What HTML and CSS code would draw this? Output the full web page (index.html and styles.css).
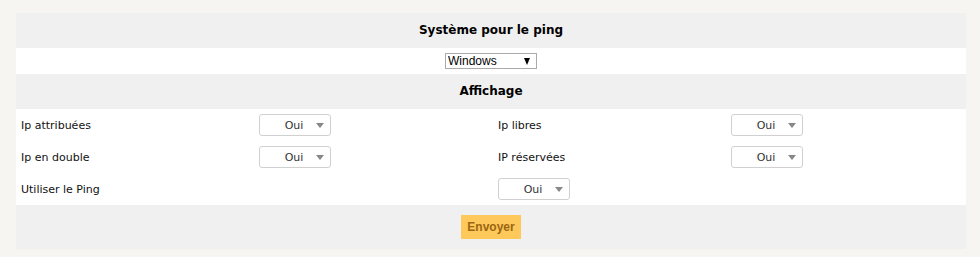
FILE: index.html
```html
<!DOCTYPE html>
<html lang="fr">
<head>
  <meta charset="UTF-8">
  <title>Options du ping</title>
  <link rel="stylesheet" href="styles.css">
</head>
<body>
  <form class="panneau" id="formOptions">
    <div class="titre">Système pour le ping</div>
    <div class="ligne-systeme">
      <span class="choix-systeme">
        <select id="systeme">
          <option>Windows</option>
          <option>Linux</option>
        </select>
      </span>
    </div>
    <div class="titre">Affichage</div>
    <div class="grille">
      <div class="cellule">Ip attribuées</div>
      <div class="cellule"><span class="choix"><select><option>Oui</option><option>Non</option></select></span></div>
      <div class="cellule">Ip libres</div>
      <div class="cellule"><span class="choix"><select><option>Oui</option><option>Non</option></select></span></div>

      <div class="cellule">Ip en double</div>
      <div class="cellule"><span class="choix"><select><option>Oui</option><option>Non</option></select></span></div>
      <div class="cellule">IP réservées</div>
      <div class="cellule"><span class="choix"><select><option>Oui</option><option>Non</option></select></span></div>

      <div class="cellule double">Utiliser le Ping</div>
      <div class="cellule double"><span class="choix"><select><option>Oui</option><option>Non</option></select></span></div>
    </div>
    <div class="pied">
      <button type="submit" class="btn-envoyer">Envoyer</button>
    </div>
  </form>
</body>
</html>
```

FILE: styles.css
```css
body {
  margin: 0;
  padding: 13px 16px;
  background: #f6f5f1;
  font-family: 'DejaVu Sans', Verdana, sans-serif;
  font-size: 11px;
  color: #111;
}

.panneau {
  width: 950px;
  background: #fff;
}

.titre {
  height: 35px;
  line-height: 35px;
  background: #f0f0f0;
  text-align: center;
  font-weight: bold;
  font-size: 12px;
  color: #000;
}

.ligne-systeme {
  height: 26px;
  display: flex;
  align-items: center;
  justify-content: center;
}

.choix-systeme {
  position: relative;
  display: inline-block;
}

.choix-systeme select {
  appearance: none;
  -webkit-appearance: none;
  width: 92px;
  height: 16px;
  margin: 0;
  padding: 0 0 0 2px;
  border: 1px solid #aaa;
  border-radius: 0;
  background: #fff;
  font-family: 'Liberation Sans', Arial, sans-serif;
  font-size: 12px;
  line-height: 14px;
  color: #000;
}

.choix-systeme::after {
  content: "";
  position: absolute;
  right: 7px;
  top: 5px;
  border-left: 3.5px solid transparent;
  border-right: 3.5px solid transparent;
  border-top: 7px solid #000;
  pointer-events: none;
}

.grille {
  display: grid;
  grid-template-columns: 238px 239px 233px 240px;
  grid-auto-rows: 32px;
}

.cellule {
  display: flex;
  align-items: center;
  padding: 0 5px;
}

.cellule.double {
  grid-column: span 2;
}

.choix {
  position: relative;
  display: inline-block;
}

.choix select {
  appearance: none;
  -webkit-appearance: none;
  width: 72px;
  height: 22px;
  margin: 0;
  padding: 0 2px 0 0;
  border: 1px solid #d0d0d0;
  border-radius: 3px;
  background: #fff;
  font-family: 'DejaVu Sans', Verdana, sans-serif;
  font-size: 11px;
  color: #333;
  text-align: center;
  text-align-last: center;
}

.choix::after {
  content: "";
  position: absolute;
  right: 7px;
  top: 9px;
  border-left: 4px solid transparent;
  border-right: 4px solid transparent;
  border-top: 5px solid #888;
  pointer-events: none;
}

.pied {
  height: 44px;
  background: #f0f0f0;
  display: flex;
  align-items: center;
  justify-content: center;
}

.btn-envoyer {
  height: 24px;
  padding: 0 6px;
  border: none;
  background: #ffc85a;
  color: #9a6611;
  font-family: 'Liberation Sans', Arial, sans-serif;
  font-weight: bold;
  font-size: 12px;
  cursor: pointer;
}
```
